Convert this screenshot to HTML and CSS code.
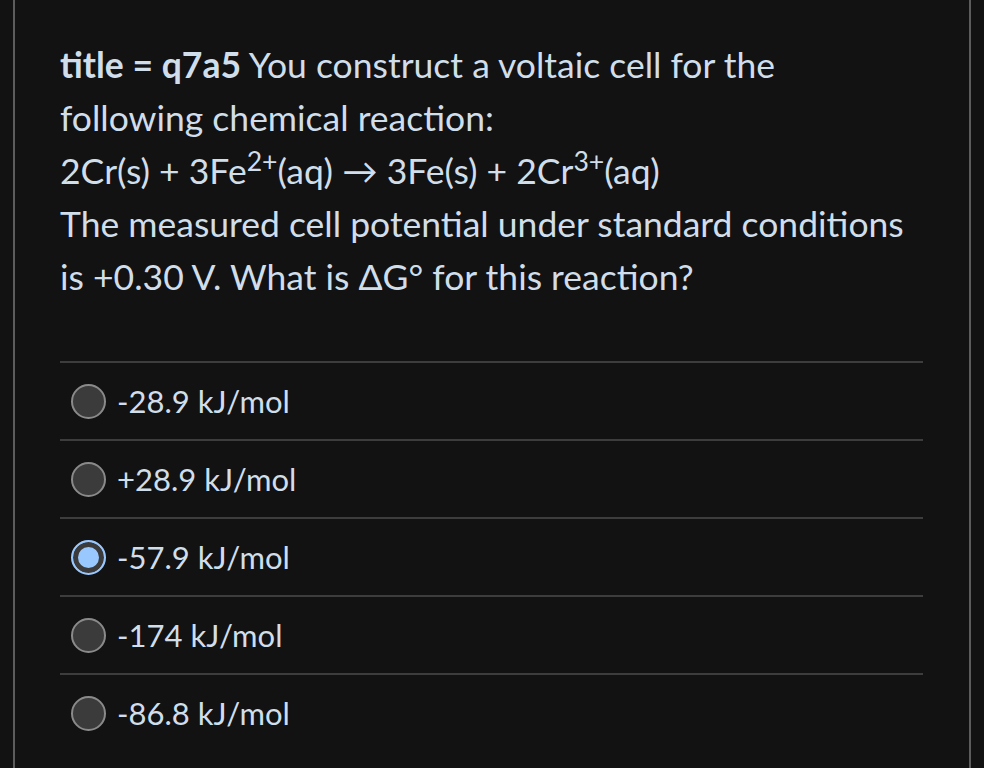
FILE: index.html
```html
<!DOCTYPE html>
<html lang="en">
<head>
<meta charset="utf-8">
<title>q7a5</title>
<link rel="stylesheet" href="styles.css">
</head>
<body>
<div class="card">
  <div class="question">
    <p><strong>title = q7a5</strong> You construct a voltaic cell for the following chemical reaction:</p>
    <p>2Cr(s) + 3Fe<sup>2+</sup>(aq) → 3Fe(s) + 2Cr<sup>3+</sup>(aq)</p>
    <p>The measured cell potential under standard conditions is +0.30 V. What is ΔG° for this reaction?</p>
  </div>
  <ul class="options">
    <li class="option"><span class="radio"></span><span class="label">-28.9 kJ/mol</span></li>
    <li class="option"><span class="radio"></span><span class="label">+28.9 kJ/mol</span></li>
    <li class="option"><span class="radio checked"></span><span class="label">-57.9 kJ/mol</span></li>
    <li class="option"><span class="radio"></span><span class="label">-174 kJ/mol</span></li>
    <li class="option"><span class="radio"></span><span class="label">-86.8 kJ/mol</span></li>
  </ul>
</div>
</body>
</html>
```

FILE: styles.css
```css
html, body {
  margin: 0;
  padding: 0;
  background: #121212;
}
body {
  font-family: "Lato", "Liberation Sans", sans-serif;
  color: #d0deeb;
}
.card {
  margin: 0 13px;
  border-left: 2px solid #5c5c5c;
  border-right: 2px solid #5c5c5c;
  padding: 38px 46px 0 45px;
  min-height: 768px;
  box-sizing: border-box;
}
.question {
  font-size: 35.5px;
  line-height: 53px;
}
.question p {
  margin: 0;
}
.question strong {
  font-weight: 700;
}
.question sup {
  font-size: 0.75em;
  line-height: 0;
  vertical-align: 0.49em;
}
.options {
  list-style: none;
  margin: 58px 0 0 0;
  padding: 0;
}
.option {
  display: flex;
  align-items: center;
  gap: 11px;
  height: 78px;
  border-top: 2px solid #3d3d3d;
  box-sizing: border-box;
  padding-left: 11px;
  font-size: 31px;
}
.radio {
  width: 35px;
  height: 35px;
  border-radius: 50%;
  box-sizing: border-box;
  border: 2px solid #8a8a8a;
  background: #3b3b3b;
  flex: none;
}
.radio.checked {
  border-color: #99c8ff;
  background: #99c8ff;
  box-shadow: inset 0 0 0 5px #3b3b3b;
}
```
